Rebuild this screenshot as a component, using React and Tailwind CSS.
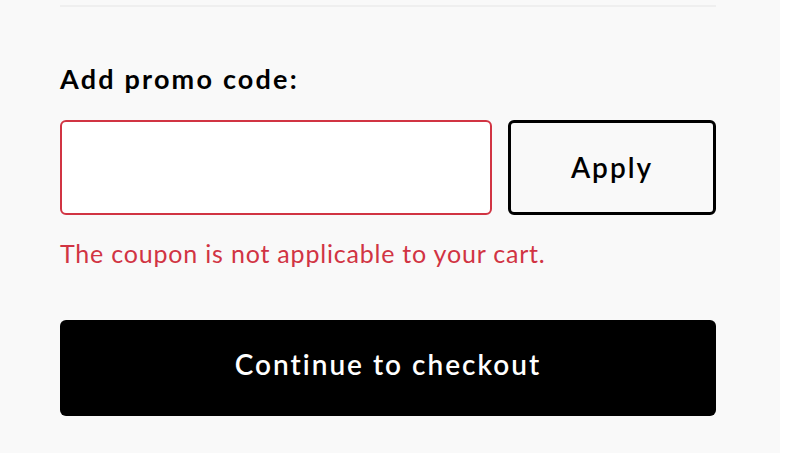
export default function App() {
  return (
    <div className="flex min-h-[453px] bg-white" style={{ fontFamily: 'Lato, "Noto Sans", sans-serif' }}>
      <div className="w-[780px] bg-[#f9f9f9] pl-[60px] pt-[5px]">
        <div className="w-[656px]">
          <div className="h-[2px] bg-[#efefef]" />

          {/* Promo code */}
          <h2 className="mt-[56px] text-[27px] font-bold leading-[32px] tracking-[2.2px] text-black">
            Add promo code:
          </h2>
          <div className="mt-[25px] flex gap-4">
            <input
              type="text"
              className="h-[95px] w-[432px] rounded-md border-2 border-[#d13443] bg-white px-4 text-[24px] outline-none"
            />
            <button className="h-[95px] flex-1 rounded-md border-[3px] border-black bg-[#f9f9f9] pb-[2px] text-[28px] font-semibold tracking-[2px] text-black">
              Apply
            </button>
          </div>
          <p className="mt-[23px] text-[25px] leading-[30px] tracking-[0.8px] text-[#d13443]">
            The coupon is not applicable to your cart.
          </p>

          {/* Checkout */}
          <button className="mt-[52px] h-[96px] w-full rounded-md bg-black pb-[8px] text-[28px] font-semibold tracking-[2px] text-white">
            Continue to checkout
          </button>
        </div>
      </div>
    </div>
  )
}
